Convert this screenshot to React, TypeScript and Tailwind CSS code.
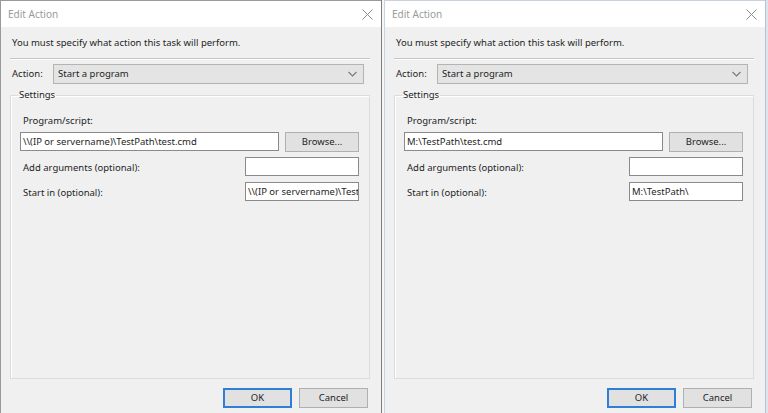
type DialogProps = {
  program: string
  startIn: string
  borderClass: string
}

const font = { fontFamily: '"Noto Sans", "Open Sans", sans-serif' }

function CloseIcon() {
  return (
    <svg width="11" height="11" viewBox="0 0 11 11" className="text-[#8a8a8a]">
      <path d="M0.5 0.5 L10.5 10.5 M10.5 0.5 L0.5 10.5" stroke="currentColor" strokeWidth="1" fill="none" />
    </svg>
  )
}

function Chevron() {
  return (
    <svg width="9" height="6" viewBox="0 0 9 6" className="text-[#7a7a7a]">
      <path d="M0.5 1 L4.5 5 L8.5 1" stroke="currentColor" strokeWidth="1.1" fill="none" />
    </svg>
  )
}

function TextBox({ value, className }: { value: string; className: string }) {
  return (
    <div className={`flex h-[19px] items-center overflow-hidden whitespace-nowrap border border-[#8a8a8a] bg-white px-[2px] ${className}`}>
      {value}
    </div>
  )
}

function EditActionDialog({ program, startIn, borderClass }: DialogProps) {
  return (
    <div className={`flex h-[413px] w-[381px] shrink-0 flex-col border-t border-l ${borderClass}`}>
      <div className="flex h-[26px] items-center justify-between bg-white pl-[7px] pr-[8px]">
        <span className="text-[10px] text-[#9a9a9a]">Edit Action</span>
        <CloseIcon />
      </div>
      <div className="flex flex-1 flex-col bg-[#f0f0f0] px-[9px] text-[9.5px] leading-[12px] text-[#1e1e1e]">
        <p className="mt-[10px] pl-[2px]">You must specify what action this task will perform.</p>
        <div className="mt-[9px] h-px w-[360px] bg-[#c4c4c4] shadow-[0_1px_0_#ffffff]" />
        <div className="mt-[5px] flex items-center pl-[2px]">
          <span className="w-[41px]">Action:</span>
          <div className="flex h-[20px] w-[311px] items-center justify-between border border-[#b4b4b4] bg-[#e4e4e4] pl-[4px] pr-[6px]">
            <span>Start a program</span>
            <Chevron />
          </div>
        </div>
        <fieldset className="mt-[5px] h-[290px] w-[360px] border border-[#dcdcdc] px-[7px] shadow-[inset_1px_1px_0_#ffffff]">
          <legend className="px-[1px]">Settings</legend>
          <div className="flex flex-col pl-[2px] pr-[3px]">
            <span className="mt-[14px] pl-[3px]">Program/script:</span>
            <div className="mt-[4px] flex items-center justify-between">
              <TextBox value={program} className="w-[259px]" />
              <div className="mt-[1px] flex h-[20px] w-[74px] items-center justify-center border border-[#b0b0b0] bg-[#e1e1e1]">
                Browse...
              </div>
            </div>
            <div className="mt-[5px] flex items-center justify-between">
              <span className="mt-[3px] pl-[3px]">Add arguments (optional):</span>
              <TextBox value="" className="w-[114px]" />
            </div>
            <div className="mt-[6px] flex items-center justify-between">
              <span className="mt-[2px] pl-[3px]">Start in (optional):</span>
              <TextBox value={startIn} className="w-[114px]" />
            </div>
          </div>
        </fieldset>
        <div className="mt-[9px] flex w-[358px] justify-end gap-[7px]">
          <div className="flex h-[20px] w-[69px] items-center justify-center border-2 border-[#2f7fd6] bg-[#e1e1e1]">OK</div>
          <div className="flex h-[20px] w-[69px] items-center justify-center border border-[#b0b0b0] bg-[#e1e1e1]">Cancel</div>
        </div>
      </div>
    </div>
  )
}

export default function App() {
  return (
    <div className="flex h-[413px] w-[768px] overflow-hidden bg-[#dfe5ec]" style={font}>
      <div className="flex border-r border-[#7d7d7d]">
        <EditActionDialog
          program="\\(IP or servername)\TestPath\test.cmd"
          startIn="\\(IP or servername)\TestPath\"
          borderClass="border-[#9a9a9a]"
        />
      </div>
      <div className="w-[2px] bg-[#f4f6f8]" />
      <div className="flex border-r border-[#b9c3d0]">
        <EditActionDialog program="M:\TestPath\test.cmd" startIn="M:\TestPath\" borderClass="border-[#c9d2dd]" />
      </div>
    </div>
  )
}
